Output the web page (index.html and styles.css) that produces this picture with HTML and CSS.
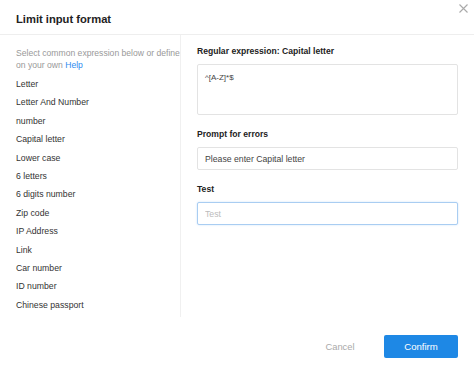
FILE: index.html
```html
<!DOCTYPE html>
<html>
<head>
  <title>Limit input format</title>
  <link rel="stylesheet" href="styles.css">
</head>
<body>
  <div class="dialog">
    <div class="dialog-header">
      <span class="dialog-title">Limit input format</span>
      <span class="close">
        <svg width="9" height="9" viewBox="0 0 9 9"><path d="M0.5 0.5L8.5 8.5M8.5 0.5L0.5 8.5" stroke="#aaa" stroke-width="1.1"/></svg>
      </span>
    </div>

    <div class="dialog-body">
      <div class="left-col">
        <p class="hint">Select common expression below or define on your own <a href="#">Help</a></p>
        <ul class="expr-list">
          <li>Letter</li>
          <li>Letter And Number</li>
          <li>number</li>
          <li>Capital letter</li>
          <li>Lower case</li>
          <li>6 letters</li>
          <li>6 digits number</li>
          <li>Zip code</li>
          <li>IP Address</li>
          <li>Link</li>
          <li>Car number</li>
          <li>ID number</li>
          <li>Chinese passport</li>
        </ul>
      </div>

      <div class="right-col">
        <label class="field-label">Regular expression: Capital letter</label>
        <textarea class="regex">^[A-Z]*$</textarea>

        <label class="field-label">Prompt for errors</label>
        <input class="text-input" type="text" value="Please enter Capital letter">

        <label class="field-label">Test</label>
        <input class="text-input focused" type="text" placeholder="Test">
      </div>
    </div>

    <div class="dialog-footer">
      <button class="btn-cancel">Cancel</button>
      <button class="btn-confirm">Confirm</button>
    </div>
  </div>
</body>
</html>
```

FILE: styles.css
```css
body {
  margin: 0;
  font-family: "Liberation Sans", Arial, sans-serif;
  background-color: #fff;
}

.dialog {
  width: 474px;
  height: 373px;
  display: flex;
  flex-direction: column;
}

.dialog-header {
  height: 34px;
  border-bottom: 1px solid #eee;
  display: flex;
  align-items: center;
  padding: 0 16px;
  position: relative;
}

.dialog-title {
  font-size: 11.2px;
  font-weight: bold;
  color: #222;
  margin-top: 3px;
}

.close {
  position: absolute;
  top: 4px;
  right: 6px;
  line-height: 0;
}

.dialog-body {
  display: flex;
  height: 282px;
}

.left-col {
  width: 164px;
  padding: 12px 0 0 16px;
  border-right: 1px solid #f0f0f0;
}

.hint {
  margin: 0;
  font-size: 8.6px;
  line-height: 12px;
  color: #999;
}

.hint a {
  color: #2d8cf0;
  text-decoration: none;
}

.expr-list {
  list-style: none;
  margin: 4px 0 0;
  padding: 0;
}

.expr-list li {
  font-size: 8.7px;
  line-height: 18.4px;
  color: #333;
  white-space: nowrap;
}

.right-col {
  flex: 1;
  padding: 9px 16px 0 16px;
  display: flex;
  flex-direction: column;
}

.field-label {
  font-size: 8.6px;
  font-weight: bold;
  color: #222;
  line-height: 14px;
  margin-bottom: 6px;
}

.regex {
  height: 51px;
  box-sizing: border-box;
  border: 1px solid #e3e3e3;
  border-radius: 2px;
  padding: 8px 7px;
  font-family: "Liberation Sans", Arial, sans-serif;
  font-size: 8px;
  color: #444;
  resize: none;
  margin: 0 0 12px;
  outline: none;
}

.text-input {
  height: 23px;
  box-sizing: border-box;
  border: 1px solid #e3e3e3;
  border-radius: 2px;
  padding: 0 7px;
  font-family: "Liberation Sans", Arial, sans-serif;
  font-size: 8.7px;
  color: #444;
  margin: 0 0 12px;
  outline: none;
}

.text-input.focused {
  border-color: #a9cdf2;
  box-shadow: 0 0 2px rgba(45, 140, 240, 0.25);
}

.text-input::placeholder {
  color: #bbb;
}

.dialog-footer {
  flex: 1;
  display: flex;
  justify-content: flex-end;
  align-items: flex-start;
  padding: 18px 16px 0;
  gap: 14px;
}

.btn-cancel {
  border: none;
  background: none;
  font-family: "Liberation Sans", Arial, sans-serif;
  font-size: 9.4px;
  color: #aaa;
  height: 23px;
  width: 60px;
  padding: 0;
}

.btn-confirm {
  border: none;
  background-color: #1e88e5;
  color: #fff;
  font-family: "Liberation Sans", Arial, sans-serif;
  font-size: 9.6px;
  height: 23px;
  width: 74px;
  border-radius: 2px;
  padding: 0;
}
```
